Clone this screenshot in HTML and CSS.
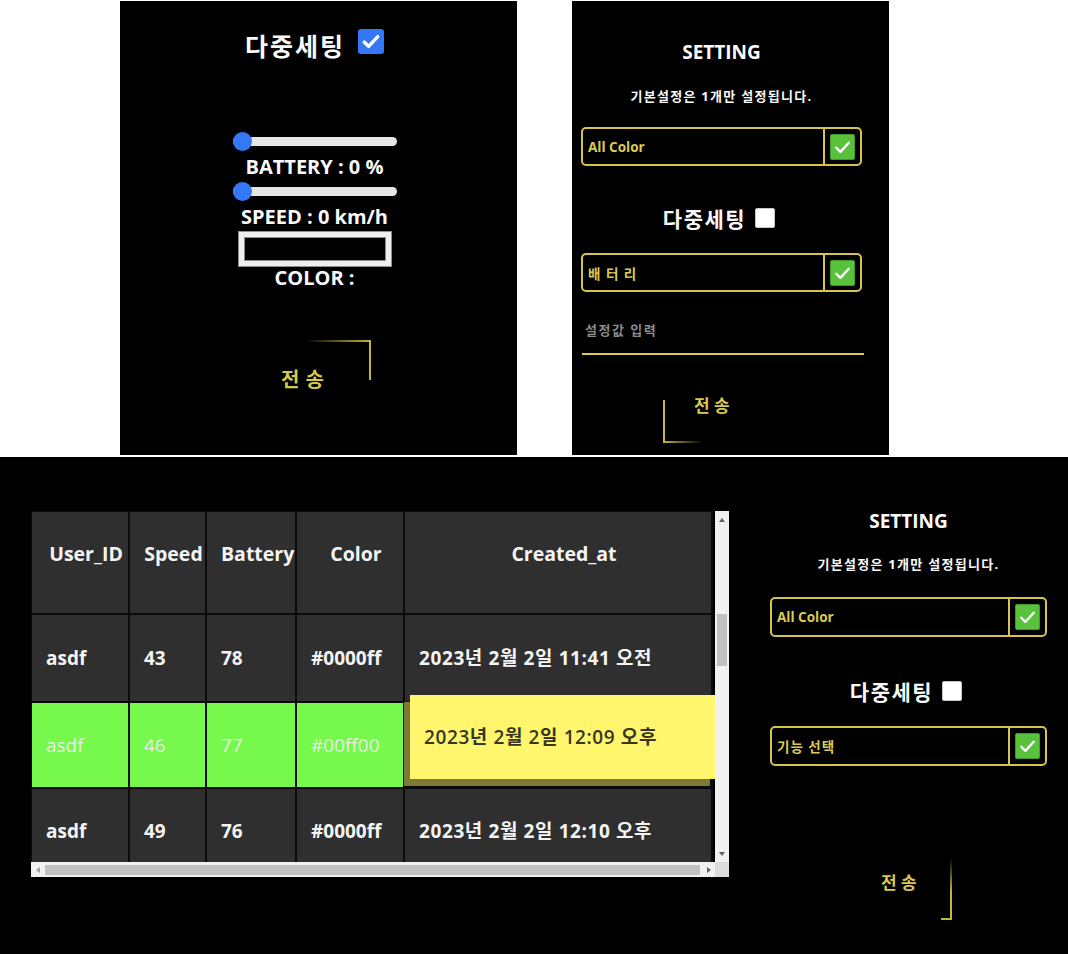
FILE: index.html
```html
<!DOCTYPE html>
<html lang="ko">
<head>
<meta charset="utf-8">
<title>Setting</title>
<link rel="stylesheet" href="styles.css">
</head>
<body>
<div class="top-row">
  <section class="panel panel-multi">
    <div class="multi-title">
      <span class="multi-title-text">다중세팅</span>
      <span class="cb cb-blue"><svg viewBox="0 0 24 24"><path d="M5.5 12.5l4.2 4.2 8.8-9.4"/></svg></span>
    </div>
    <input class="range range-first" type="range" min="0" max="100" value="0">
    <div class="range-label">BATTERY : 0 %</div>
    <input class="range" type="range" min="0" max="100" value="0">
    <div class="range-label">SPEED : 0 km/h</div>
    <div class="color-box"></div>
    <div class="range-label">COLOR :</div>
    <div class="send send-tl">전 송</div>
  </section>

  <section class="panel panel-setting">
    <div class="setting-col setting-col-top">
      <h2 class="setting-title">SETTING</h2>
      <p class="setting-note">기본설정은 1개만 설정됩니다.</p>
      <div class="select">
        <span class="select-label">All Color</span>
        <span class="select-check"><span class="cb cb-green"><svg viewBox="0 0 24 24"><path d="M5.5 12.8l4.3 4.3 8.7-9.6"/></svg></span></span>
      </div>
      <div class="multi-row">
        <span class="multi-row-text">다중세팅</span>
        <span class="cb cb-white"></span>
      </div>
      <div class="select">
        <span class="select-label select-label-ko">배 터 리</span>
        <span class="select-check"><span class="cb cb-green"><svg viewBox="0 0 24 24"><path d="M5.5 12.8l4.3 4.3 8.7-9.6"/></svg></span></span>
      </div>
      <input class="value-input" type="text" placeholder="설정값 입력">
      <div class="send send-tr">전 송</div>
    </div>
  </section>
</div>

<section class="panel-bottom">
  <div class="grid-wrap">
    <div class="viewport">
      <table class="data">
        <thead>
          <tr class="head-row">
            <th class="c-id">User_ID</th>
            <th class="c-speed">Speed</th>
            <th class="c-bat">Battery</th>
            <th class="c-color">Color</th>
            <th class="c-date">Created_at</th>
          </tr>
        </thead>
        <tbody>
          <tr class="row-1">
            <td>asdf</td><td>43</td><td>78</td><td>#0000ff</td><td class="date">2023년 2월 2일 11:41 오전</td>
          </tr>
          <tr class="row-2 row-hit">
            <td>asdf</td><td>46</td><td>77</td><td>#00ff00</td><td class="date cell-hover">2023년 2월 2일 12:09 오후</td>
          </tr>
          <tr class="row-3">
            <td>asdf</td><td>49</td><td>76</td><td>#0000ff</td><td class="date">2023년 2월 2일 12:10 오후</td>
          </tr>
        </tbody>
      </table>
    </div>
    <div class="vscroll">
      <span class="sb-btn sb-btn-v"><span class="tri tri-up"></span></span>
      <span class="sb-track-v"><span class="sb-thumb-v"></span></span>
      <span class="sb-btn sb-btn-v"><span class="tri tri-down"></span></span>
    </div>
    <div class="hscroll">
      <span class="sb-btn sb-btn-h"><span class="tri tri-left"></span></span>
      <span class="sb-track-h"><span class="sb-thumb-h"></span></span>
      <span class="sb-btn sb-btn-h sb-btn-r"><span class="tri tri-right"></span></span>
    </div>
    <div class="sb-corner"></div>
  </div>

  <div class="setting-col setting-col-b">
    <h2 class="setting-title">SETTING</h2>
    <p class="setting-note">기본설정은 1개만 설정됩니다.</p>
    <div class="select select-b">
      <span class="select-label">All Color</span>
      <span class="select-check"><span class="cb cb-green"><svg viewBox="0 0 24 24"><path d="M5.5 12.8l4.3 4.3 8.7-9.6"/></svg></span></span>
    </div>
    <div class="multi-row">
      <span class="multi-row-text">다중세팅</span>
      <span class="cb cb-white"></span>
    </div>
    <div class="select select-b">
      <span class="select-label select-label-ko">기능 선택</span>
      <span class="select-check"><span class="cb cb-green"><svg viewBox="0 0 24 24"><path d="M5.5 12.8l4.3 4.3 8.7-9.6"/></svg></span></span>
    </div>
    <div class="send send-br">전 송</div>
  </div>
</section>
</body>
</html>
```

FILE: styles.css
```css
* { box-sizing: border-box; }

html, body {
  margin: 0;
  padding: 0;
  width: 1068px;
  height: 954px;
  overflow: hidden;
  background: #ffffff;
  font-family: "Open Sans", "Noto Sans CJK KR", sans-serif;
}

/* ---------- top row ---------- */
.top-row {
  display: flex;
  align-items: flex-start;
  gap: 55px;
  height: 455px;
  padding: 1px 0 0 120px;
}

.panel {
  background: #000;
  height: 454px;
}

.panel-multi {
  width: 397px;
  padding: 30px 8px 0 0;
  display: flex;
  flex-direction: column;
  align-items: center;
}

.multi-title {
  display: flex;
  align-items: flex-start;
  gap: 13px;
  height: 30px;
}

.multi-title-text {
  font-size: 25px;
  line-height: 30px;
  font-weight: 700;
  letter-spacing: 2px;
  color: #fafafa;
}

.cb {
  display: inline-flex;
  align-items: center;
  justify-content: center;
  flex: none;
}

.cb svg {
  width: 100%;
  height: 100%;
  fill: none;
  stroke: #fff;
  stroke-linecap: round;
  stroke-linejoin: round;
}

.cb-blue {
  width: 26px;
  height: 25px;
  margin-top: -2px;
  border-radius: 3px;
  background: #3478f6;
}

.cb-blue svg { stroke-width: 3.2; }

.cb-green {
  width: 25px;
  height: 26px;
  border-radius: 2px;
  background: #58c23c;
  border: 1px solid #3f9a2a;
}

.cb-green svg { stroke-width: 2.4; }

.cb-white {
  width: 20px;
  height: 20px;
  border-radius: 2px;
  background: #ffffff;
  border: 1px solid #c8c8c8;
  margin-top: -2px;
}

.range {
  -webkit-appearance: none;
  appearance: none;
  display: block;
  width: 164px;
  height: 18px;
  margin: 4px 0 0;
  padding: 0;
  background: transparent;
}

.range-first { margin-top: 71px; }

.range::-webkit-slider-runnable-track {
  height: 9px;
  border-radius: 5px;
  background: #e5e5e5;
}

.range::-webkit-slider-thumb {
  -webkit-appearance: none;
  appearance: none;
  width: 19px;
  height: 19px;
  margin-top: -5px;
  border: none;
  border-radius: 50%;
  background: #3478f6;
}

.range-label {
  margin-top: 6px;
  font-size: 20px;
  line-height: 22px;
  font-weight: 700;
  color: #fafafa;
  white-space: nowrap;
}

.color-box {
  width: 154px;
  height: 36px;
  margin-top: 3px;
  border: 6px solid #eeeeee;
  outline: 1px solid #8e8e8e;
  outline-offset: -1px;
  box-shadow: inset 0 0 0 1px #8e8e8e;
  background: #000;
}

.color-box + .range-label { margin-top: 0; }

/* ---------- send buttons ---------- */
.send {
  position: relative;
  font-weight: 700;
  color: #d8ca4c;
  white-space: nowrap;
}

.send::before,
.send::after {
  content: "";
  position: absolute;
}

.send-tl {
  width: 98px;
  height: 52px;
  margin: 51px 0 0 15px;
  padding: 28px 0 0 8px;
  font-size: 20px;
  line-height: 24px;
  letter-spacing: 0.5px;
}

.send-tl::before {
  left: 32px;
  right: 0;
  top: 0;
  height: 2px;
  background: linear-gradient(to right, rgba(200, 182, 58, 0), #c8b63a);
}

.send-tl::after {
  right: 0;
  top: 0;
  width: 2px;
  height: 40px;
  background: #c8b63a;
}

.send-tr {
  align-self: center;
  width: 97px;
  height: 47px;
  margin: 41px 20px 0 0;
  padding: 0 0 0 31px;
  font-size: 17px;
  line-height: 20px;
}

.send-tr::before {
  left: 0;
  top: 4px;
  bottom: 0;
  width: 2px;
  background: #c8b63a;
}

.send-tr::after {
  left: 0;
  bottom: 0;
  width: 40px;
  height: 2px;
  background: linear-gradient(to right, #c8b63a, rgba(200, 182, 58, 0));
}

.send-br {
  align-self: center;
  width: 101px;
  height: 62px;
  margin: 92px 14px 0 0;
  padding: 15px 0 0 30px;
  font-size: 17px;
  line-height: 20px;
}

.send-br::before {
  right: 0;
  top: 0;
  bottom: 0;
  width: 2px;
  background: linear-gradient(to bottom, rgba(200, 182, 58, 0), #c8b63a 55%);
}

.send-br::after {
  right: 0;
  bottom: 0;
  width: 11px;
  height: 2px;
  background: #c8b63a;
}

/* ---------- setting column ---------- */
.panel-setting {
  width: 317px;
  padding: 0 27px 0 9px;
}

.setting-col {
  display: flex;
  flex-direction: column;
}

.setting-col-top { padding-top: 39px; }

.setting-title {
  margin: 0;
  font-size: 19px;
  line-height: 24px;
  font-weight: 700;
  color: #fafafa;
  text-align: center;
}

.setting-note {
  margin: 23px 0 0;
  font-size: 13px;
  line-height: 18px;
  font-weight: 700;
  letter-spacing: 1.3px;
  color: #fafafa;
  text-align: center;
  white-space: nowrap;
}

.select {
  display: flex;
  height: 39px;
  margin-top: 22px;
  border: 2px solid #d6c44b;
  border-radius: 5px;
}

.select-label {
  flex: 1;
  display: flex;
  align-items: center;
  padding-left: 5px;
  font-size: 13.5px;
  font-weight: 700;
  color: #dccb50;
  white-space: nowrap;
}

.select-label-ko { letter-spacing: 1px; }

.select-check {
  width: 37px;
  border-left: 2px solid #d6c44b;
  display: flex;
  align-items: center;
  justify-content: center;
}

.multi-row {
  display: flex;
  justify-content: center;
  align-items: center;
  gap: 9px;
  height: 24px;
  margin-top: 41px;
  padding-right: 5px;
}

.multi-row-text {
  font-size: 21px;
  line-height: 24px;
  font-weight: 700;
  letter-spacing: 1.5px;
  color: #fafafa;
}

.value-input {
  display: block;
  align-self: flex-start;
  width: 282px;
  height: 48px;
  margin: 15px 0 0 1px;
  padding: 0 0 0 3px;
  border: 0;
  border-bottom: 2px solid #dccb4a;
  background: transparent;
  outline: none;
  font-family: "Open Sans", "Noto Sans CJK KR", sans-serif;
  font-size: 13px;
  font-weight: 700;
  letter-spacing: 1.5px;
  color: #dddddd;
}

.value-input::placeholder { color: #8c8c8c; }

/* ---------- bottom panel ---------- */
.panel-bottom {
  display: flex;
  align-items: flex-start;
  margin-top: 2px;
  height: 497px;
  padding-left: 31px;
  background: #000;
}

.grid-wrap {
  display: grid;
  grid-template-columns: 684px 14px;
  grid-template-rows: 351px 15px;
  width: 698px;
  height: 366px;
  margin-top: 54px;
  background: #f0f0f0;
}

.viewport {
  overflow: hidden;
  background: #000;
}

.data {
  table-layout: fixed;
  width: 683px;
  margin: -1px;
  border-collapse: separate;
  border-spacing: 2px;
  background: #0b0b0b;
}

.data th,
.data td {
  background: #2f2f2f;
  color: #f4f4f4;
  white-space: nowrap;
  overflow: visible;
}

.data th {
  height: 101px;
  padding: 30px 2px 0 14px;
  vertical-align: top;
  text-align: center;
  font-size: 19.5px;
  line-height: 24px;
  font-weight: 700;
}

.c-id { width: 96px; }
.c-speed { width: 75px; }
.c-bat { width: 88px; }
.c-color { width: 106px; }
.c-date { width: 306px; }

.data td {
  padding: 0 4px 0 14px;
  vertical-align: middle;
  text-align: left;
  font-size: 19px;
  line-height: 24px;
  font-weight: 700;
}

.data td.date { letter-spacing: 0.6px; }

.row-1 td { height: 86px; }
.row-2 td { height: 84px; }
.row-3 td { height: 84px; }

.row-hit td {
  background: #76f94c;
  color: #e6eee6;
  font-weight: 400;
}

.row-hit td.cell-hover {
  position: relative;
  z-index: 1;
  background: #fff66e;
  color: #37361f;
  font-weight: 600;
  transform: translate(5px, -8px);
  box-shadow: -6px 7px 0 #7e7a36;
}

/* scrollbars */
.vscroll {
  display: flex;
  flex-direction: column;
  background: #f1f1f1;
}

.hscroll {
  display: flex;
  background: #f1f1f1;
}

.sb-corner { background: #dcdcdc; }

.sb-btn {
  display: flex;
  align-items: center;
  justify-content: center;
  flex: none;
}

.sb-btn-v { height: 17px; }
.sb-btn-h { width: 14px; }
.sb-btn-r { width: 13px; }

.sb-track-v {
  flex: 1;
  display: flex;
  flex-direction: column;
  align-items: center;
}

.sb-thumb-v {
  width: 10px;
  height: 52px;
  margin-top: 86px;
  background: #c1c1c1;
}

.sb-track-h {
  flex: 1;
  display: flex;
  align-items: center;
}

.sb-thumb-h {
  flex: 1;
  height: 10px;
  margin-right: 2px;
  background: #c1c1c1;
}

.tri {
  width: 0;
  height: 0;
  border-style: solid;
  border-color: transparent;
}

.tri-up { border-width: 0 3px 4px 3px; border-bottom-color: #606060; }
.tri-down { border-width: 4px 3px 0 3px; border-top-color: #606060; }
.tri-left { border-width: 3px 4px 3px 0; border-right-color: #a0a0a0; }
.tri-right { border-width: 3px 0 3px 4px; border-left-color: #606060; }

.setting-col-b {
  width: 277px;
  margin: 52px 0 0 41px;
}

.setting-col-b .setting-note { margin-top: 22px; }
.setting-col-b .select { height: 40px; }
.setting-col-b .select:first-of-type { margin-top: 24px; }
.setting-col-b .multi-row { margin-top: 43px; }
```
